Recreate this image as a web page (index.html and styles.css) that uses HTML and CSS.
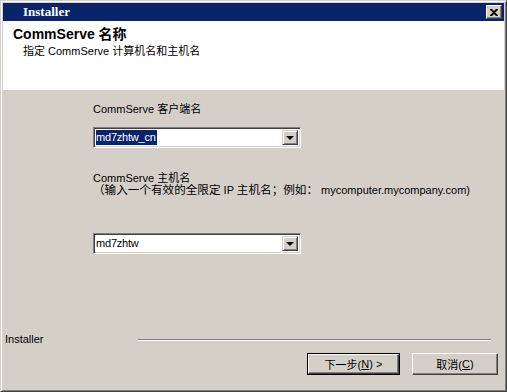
FILE: index.html
```html
<!DOCTYPE html>
<html lang="zh-CN">
<head>
<meta charset="utf-8">
<title>Installer</title>
<link rel="stylesheet" href="styles.css">
</head>
<body>
<div class="window">
  <div class="titlebar">
    <span class="title">Installer</span>
    <span class="close-btn">
      <svg width="8" height="7" viewBox="0 0 8 7"><path d="M0 0h2l2 2 2-2h2v1L5 3.5 8 6v1H6L4 5 2 7H0V6l3-2.5L0 1z" fill="#000"/></svg>
    </span>
  </div>
  <div class="header">
    <div class="h-title">CommServe 名称</div>
    <div class="h-sub">指定 CommServe 计算机名和主机名</div>
  </div>
  <div class="body">
    <div class="form">
      <div class="label first">CommServe 客户端名</div>
      <div class="combo">
        <div class="combo-field"><span class="sel">md7zhtw_cn</span></div>
        <div class="combo-btn"><span class="arrow"></span></div>
      </div>
      <div class="label second">CommServe 主机名<br><span class="zh">（输入一个有效的全限定</span> IP <span class="zh">主机名；例如：</span> mycomputer.mycompany.com)</div>
      <div class="combo combo2">
        <div class="combo-field"><span class="val">md7zhtw</span></div>
        <div class="combo-btn"><span class="arrow"></span></div>
      </div>
    </div>
    <div class="footer">
      <div class="brand-row">
        <span class="brand">Installer</span>
        <span class="etch"></span>
      </div>
      <div class="buttons">
        <button class="btn btn-default"><span class="btn-inner">下一步(<u>N</u>) &gt;</span></button>
        <button class="btn btn-cancel"><span class="btn-inner">取消(<u>C</u>)</span></button>
      </div>
    </div>
  </div>
</div>
</body>
</html>
```
FILE: styles.css
```css
html, body {
  margin: 0;
  padding: 0;
  background: #d4d0c8;
}
body {
  width: 507px;
  height: 392px;
  overflow: hidden;
  font-family: "Liberation Sans", "Noto Sans CJK SC", sans-serif;
  font-size: 11px;
  color: #000;
}
.window {
  width: 507px;
  height: 392px;
  box-sizing: border-box;
  border: 1px solid;
  border-color: #d4d0c8 #404040 #404040 #d4d0c8;
  box-shadow: inset 1px 1px #fff, inset -1px -1px #808080;
  padding: 2px;
  display: flex;
  flex-direction: column;
  background: #d4d0c8;
}
.titlebar {
  height: 18px;
  background: #0a246a;
  display: flex;
  align-items: center;
  justify-content: space-between;
  padding: 0 2px 0 20px;
}
.title {
  font-family: "Liberation Serif", serif;
  font-weight: bold;
  font-size: 13px;
  color: #fff;
  line-height: 18px;
}
.close-btn {
  width: 16px;
  height: 14px;
  box-sizing: border-box;
  background: #d4d0c8;
  border: 1px solid;
  border-color: #fff #404040 #404040 #fff;
  box-shadow: inset -1px -1px #808080;
  display: flex;
  align-items: center;
  justify-content: center;
  padding-right: 1px;
}
.close-btn svg { display: block; }
.header {
  height: 69px;
  background: #fff;
  padding: 5px 0 0 10px;
  box-sizing: border-box;
}
.h-title {
  font-weight: bold;
  font-size: 14px;
  line-height: 17px;
}
.h-sub {
  padding-left: 10px;
  margin-top: 2px;
  line-height: 13px;
}
.body {
  flex: 1;
  display: flex;
  flex-direction: column;
}
.form {
  flex: 1;
  padding: 13px 0 0 90px;
}
.label {
  line-height: 13px;
  white-space: nowrap;
}
.label.second {
  margin-top: 24px;
  line-height: 12px;
}
.zh {
  font-size: 11.6px;
}
.combo {
  width: 208px;
  height: 21px;
  box-sizing: border-box;
  border: 1px solid;
  border-color: #808080 #fff #fff #808080;
  box-shadow: inset 1px 1px #404040, inset -1px -1px #d4d0c8;
  background: #fff;
  display: flex;
  padding: 2px;
  margin-top: 11px;
}
.combo2 { margin-top: 37px; }
.combo-field {
  flex: 1;
  display: flex;
  align-items: center;
  padding-left: 0;
}
.sel {
  background: #0a246a;
  color: #fff;
  line-height: 15px;
  padding: 0 1px 0 0;
  letter-spacing: -0.2px;
}
.val {
  line-height: 15px;
  padding-left: 0;
  letter-spacing: -0.2px;
}
.combo-btn {
  width: 16px;
  height: 15px;
  box-sizing: border-box;
  background: #d4d0c8;
  border: 1px solid;
  border-color: #d4d0c8 #404040 #404040 #d4d0c8;
  box-shadow: inset 1px 1px #fff, inset -1px -1px #808080;
  display: flex;
  align-items: center;
  justify-content: center;
}
.arrow {
  width: 0;
  height: 0;
  border-left: 4px solid transparent;
  border-right: 4px solid transparent;
  border-top: 4px solid #000;
  margin-top: 1px;
}
.footer {
  height: 59px;
  padding: 3px 0 0 2px;
  box-sizing: border-box;
}
.brand-row {
  display: flex;
  align-items: center;
  height: 13px;
}
.brand {
  color: #000;
  width: 133px;
  line-height: 13px;
}
.etch {
  width: 353px;
  height: 0;
  border-top: 1px solid #808080;
  border-bottom: 1px solid #fff;
}
.buttons {
  display: flex;
  justify-content: flex-end;
  gap: 12px;
  padding-right: 6px;
  margin-top: 7px;
}
.btn {
  font-family: inherit;
  font-size: 11px;
  color: #000;
  background: #d4d0c8;
  height: 22px;
  padding: 0;
  margin: 0;
  border: 0;
  box-sizing: border-box;
  display: flex;
}
.btn-inner {
  flex: 1;
  display: flex;
  align-items: center;
  justify-content: center;
  box-sizing: border-box;
  border: 1px solid;
  border-color: #fff #404040 #404040 #fff;
  box-shadow: inset -1px -1px #808080;
}
.btn-default {
  width: 93px;
  border: 1px solid #000;
}
.btn-cancel {
  width: 86px;
}
u { text-decoration: underline; }
```
